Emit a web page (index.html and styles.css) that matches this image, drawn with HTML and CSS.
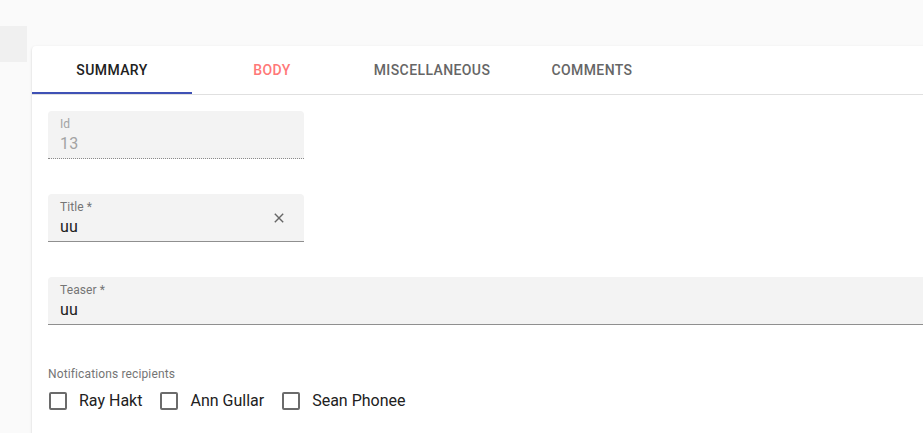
FILE: index.html
```html
<!DOCTYPE html>
<html lang="en">
<head>
<meta charset="utf-8">
<title>Edit post</title>
<link rel="stylesheet" href="styles.css">
</head>
<body>
<div class="layout">
  <aside class="sidebar"><div class="side-item"></div></aside>
  <main class="main">
    <section class="card">
      <nav class="tabs">
        <div class="tab active">Summary<span class="indicator"></span></div>
        <div class="tab error">Body</div>
        <div class="tab">Miscellaneous</div>
        <div class="tab">Comments</div>
      </nav>
      <div class="content">
        <div class="field disabled">
          <div class="field-body">
            <div class="label">Id</div>
            <div class="value">13</div>
          </div>
        </div>
        <div class="field">
          <div class="field-body">
            <div class="label">Title *</div>
            <div class="value">uu</div>
          </div>
          <span class="clear"><svg width="10" height="10" viewBox="0 0 10 10"><path d="M0.8 0.8 L9.2 9.2 M9.2 0.8 L0.8 9.2" stroke="#666" stroke-width="1.4" fill="none"/></svg></span>
        </div>
        <div class="field full">
          <div class="field-body">
            <div class="label">Teaser *</div>
            <div class="value">uu</div>
          </div>
        </div>
        <div class="group">
          <div class="group-label">Notifications recipients</div>
          <div class="checks">
            <label class="check"><span class="box"></span>Ray Hakt</label>
            <label class="check"><span class="box"></span>Ann Gullar</label>
            <label class="check"><span class="box"></span>Sean Phonee</label>
          </div>
        </div>
      </div>
    </section>
  </main>
</div>
</body>
</html>
```
FILE: styles.css
```css
html, body {
  margin: 0;
  padding: 0;
  height: 100%;
  overflow: hidden;
}
body {
  background: #fafafa;
  font-family: Roboto, "Liberation Sans", sans-serif;
  color: #212121;
}
.layout {
  display: flex;
  height: 100%;
}
.sidebar {
  width: 27px;
  flex: none;
}
.side-item {
  margin-top: 26px;
  height: 36px;
  background: #f0f0f0;
}
.main {
  flex: none;
  padding: 46px 0 0 5px;
}
.card {
  width: 1000px;
  height: 500px;
  background: #fff;
  border-radius: 4px;
  box-shadow: 0 2px 1px -1px rgba(0,0,0,.2), 0 1px 1px 0 rgba(0,0,0,.14), 0 1px 3px 0 rgba(0,0,0,.12);
}
.tabs {
  display: flex;
  border-bottom: 1px solid #e0e0e0;
}
.tab {
  position: relative;
  width: 160px;
  height: 48px;
  display: flex;
  align-items: center;
  justify-content: center;
  font-size: 14px;
  font-weight: 500;
  letter-spacing: 0.4px;
  text-transform: uppercase;
  color: #666;
}
.tab.active { color: #212121; }
.tab.error { color: #ff7878; }
.indicator {
  position: absolute;
  left: 0;
  right: 0;
  bottom: 0;
  height: 2px;
  background: #3f51b5;
}
.content {
  padding: 16px 16px 0 16px;
}
.field {
  width: 256px;
  box-sizing: border-box;
  height: 48px;
  background: #f3f3f3;
  border-radius: 4px 4px 0 0;
  border-bottom: 1px solid #8f8f8f;
  display: flex;
  align-items: center;
  padding: 0 20px 0 12px;
  margin-bottom: 35px;
}
.field.full {
  width: auto;
}
.field.disabled {
  border-bottom: 1px dotted #8a8a8a;
}
.field-body {
  flex: 1;
  align-self: flex-start;
  padding-top: 5px;
}
.label {
  font-size: 12px;
  line-height: 16px;
  letter-spacing: 0.1px;
  color: #757575;
}
.value {
  margin-top: 2px;
  font-size: 16px;
  line-height: 19px;
  letter-spacing: 0.15px;
  color: #212121;
}
.disabled .label,
.disabled .value {
  color: #a3a3a3;
}
.clear {
  display: flex;
  width: 10px;
  height: 10px;
}
.group {
  padding-top: 6px;
}
.group-label {
  font-size: 12px;
  line-height: 16px;
  letter-spacing: 0.13px;
  color: #757575;
}
.checks {
  display: flex;
  margin-top: 7px;
}
.check {
  display: flex;
  align-items: center;
  font-size: 16px;
  line-height: 24px;
  color: #212121;
  margin-right: 17px;
}
.box {
  width: 18px;
  height: 18px;
  box-sizing: border-box;
  border: 2px solid #6b6b6b;
  border-radius: 2px;
  margin: 0 12px 0 1px;
}
```
